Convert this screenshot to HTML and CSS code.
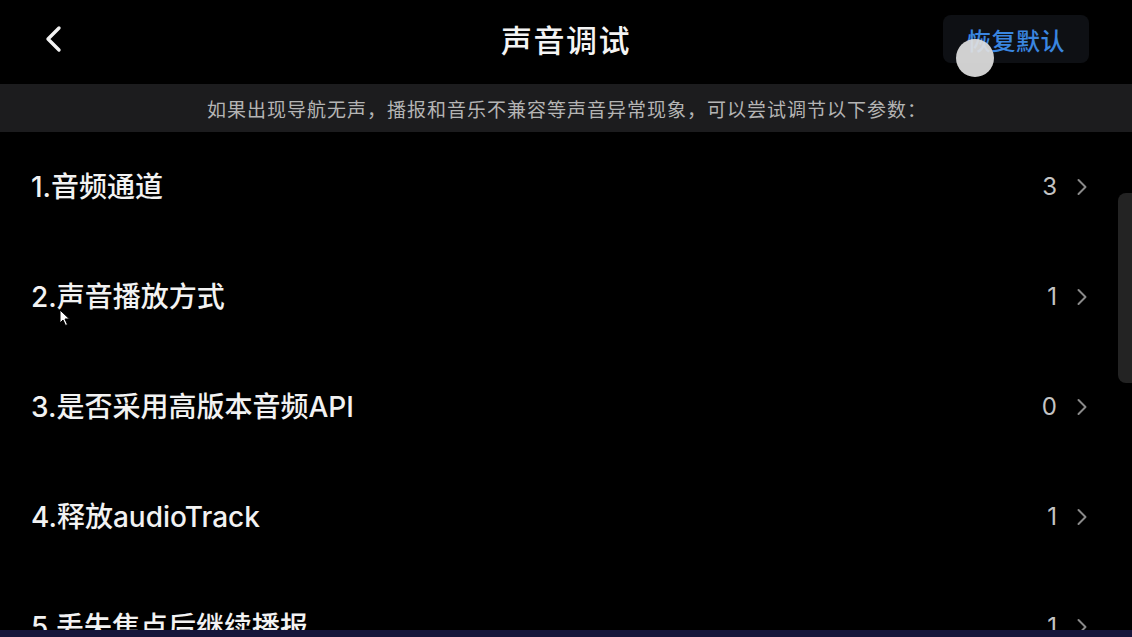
FILE: index.html
```html
<!DOCTYPE html>
<html lang="zh">
<head>
<meta charset="utf-8">
<title>声音调试</title>
<link rel="stylesheet" href="styles.css">
</head>
<body>
<div class="screen">
  <header class="topbar">
    <div class="left">
      <svg class="back" width="20" height="28" viewBox="0 0 20 28"><path d="M16 3 L5 14 L16 25" fill="none" stroke="#f2f2f2" stroke-width="3.4" stroke-linecap="round" stroke-linejoin="round"/></svg>
    </div>
    <h1 class="title">声音调试</h1>
    <div class="right">
      <button class="reset">恢复默认</button>
    </div>
  </header>
  <div class="notice">如果出现导航无声，播报和音乐不兼容等声音异常现象，可以尝试调节以下参数：</div>
  <ul class="list">
    <li class="row"><span class="label">1.音频通道</span><span class="val">3</span><svg class="chev" width="12" height="18" viewBox="0 0 12 18"><path d="M2.5 2 L9.5 9 L2.5 16" fill="none" stroke="#8a8a8a" stroke-width="2" stroke-linecap="round" stroke-linejoin="round"/></svg></li>
    <li class="row"><span class="label">2.声音播放方式</span><span class="val">1</span><svg class="chev" width="12" height="18" viewBox="0 0 12 18"><path d="M2.5 2 L9.5 9 L2.5 16" fill="none" stroke="#8a8a8a" stroke-width="2" stroke-linecap="round" stroke-linejoin="round"/></svg></li>
    <li class="row"><span class="label">3.是否采用高版本音频API</span><span class="val">0</span><svg class="chev" width="12" height="18" viewBox="0 0 12 18"><path d="M2.5 2 L9.5 9 L2.5 16" fill="none" stroke="#8a8a8a" stroke-width="2" stroke-linecap="round" stroke-linejoin="round"/></svg></li>
    <li class="row"><span class="label">4.释放audioTrack</span><span class="val">1</span><svg class="chev" width="12" height="18" viewBox="0 0 12 18"><path d="M2.5 2 L9.5 9 L2.5 16" fill="none" stroke="#8a8a8a" stroke-width="2" stroke-linecap="round" stroke-linejoin="round"/></svg></li>
    <li class="row"><span class="label">5.丢失焦点后继续播报</span><span class="val">1</span><svg class="chev" width="12" height="18" viewBox="0 0 12 18"><path d="M2.5 2 L9.5 9 L2.5 16" fill="none" stroke="#8a8a8a" stroke-width="2" stroke-linecap="round" stroke-linejoin="round"/></svg></li>
  </ul>
  <div class="touch"></div>
  <div class="scroll"></div>
  <svg class="cursor" width="12" height="18" viewBox="0 0 12 18"><path d="M1 1 L1 14 L4 11 L6.5 16.5 L8.5 15.5 L6 10 L10.5 10 Z" fill="#fff" stroke="#000" stroke-width="1"/></svg>
  <div class="bottombar"></div>
</div>
</body>
</html>
```
FILE: styles.css
```css
* { box-sizing: border-box; }
html, body { margin: 0; padding: 0; background: #000; }
body { font-family: "Noto Sans CJK SC", "Noto Sans", sans-serif; }
.screen { position: relative; width: 1132px; height: 637px; overflow: hidden; background: #000; }
.topbar { height: 84px; display: grid; grid-template-columns: 1fr auto 1fr; align-items: center; padding: 0 43px 0 43px; }
.left { display: flex; align-items: center; }
.back { display: block; margin-top: -6px; }
.title { margin: 0; font-size: 31px; font-weight: 500; color: #f4f4f4; letter-spacing: 1.5px; line-height: 1; margin-top: -8px; }
.right { display: flex; justify-content: flex-end; }
.reset { width: 146px; height: 48px; margin-top: -6px; border: none; border-radius: 8px; background: #0e1014; color: #3a86e0; font-family: inherit; font-size: 24px; font-weight: 500; letter-spacing: 0.5px; padding: 0; }
.notice { height: 48px; background: #1c1c1e; color: #b4b4b4; font-size: 19px; letter-spacing: 1px; display: flex; align-items: center; justify-content: center; padding-left: 2px; }
.list { list-style: none; margin: 0; padding: 0; }
.row { height: 110px; display: flex; align-items: center; padding: 0 44px 0 31px; }
.label { flex: 1; color: #f2f2f2; font-family: "Inter", "Noto Sans CJK SC", sans-serif; font-weight: 500; font-size: 28px; line-height: 1; }
.val { color: #c4c4c4; font-family: "Inter", "Noto Sans CJK SC", sans-serif; font-size: 24px; margin-right: 19px; line-height: 1; }
.chev { display: block; }
.touch { position: absolute; left: 956px; top: 39px; width: 38px; height: 38px; border-radius: 50%; background: rgba(225, 225, 225, 0.92); }
.scroll { position: absolute; right: 0; top: 193px; width: 14px; height: 190px; border-radius: 8px 0 0 8px; background: #232323; }
.cursor { position: absolute; left: 59px; top: 309px; }
.bottombar { position: absolute; left: 0; right: 0; bottom: 0; height: 7px; background: #16163a; }
```
